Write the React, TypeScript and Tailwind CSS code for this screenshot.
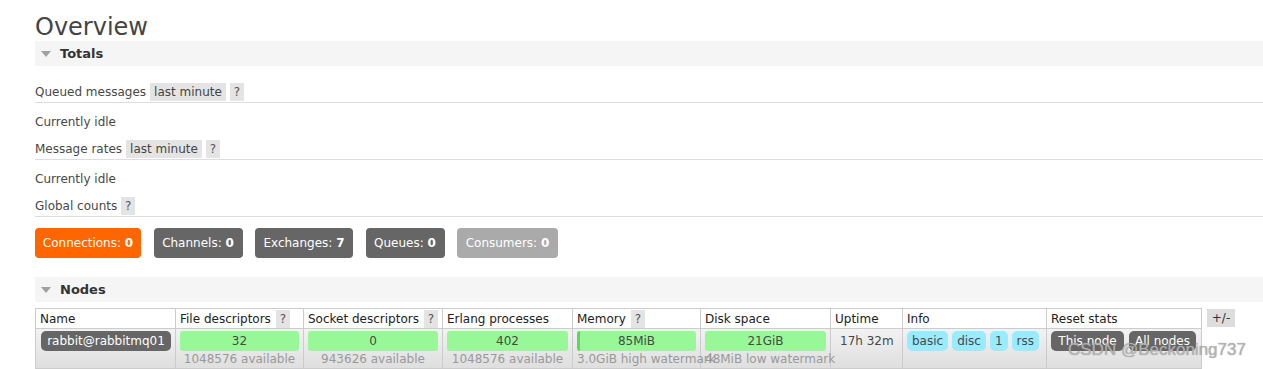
import React from "react";

const font = { fontFamily: '"DejaVu Sans", Verdana, sans-serif' };

function SectionBar({ title }: { title: string }) {
  return (
    <div className="flex h-[25px] items-center bg-[#f5f5f5]">
      <svg className="ml-[6px] h-[6px] w-[10px]" viewBox="0 0 10 6">
        <path d="M0 0h10L5 6z" fill="#a0a0a0" />
      </svg>
      <span className="ml-[9px] text-[13px] font-bold text-[#333]">{title}</span>
    </div>
  );
}

function Help() {
  return (
    <span className="ml-[4px] flex h-[18px] w-[14px] items-center justify-center bg-[#e4e4e4] text-[#555]">?</span>
  );
}

function Range({ label }: { label: string }) {
  return <span className="ml-[4px] flex h-[18px] items-center bg-[#e4e4e4] px-[4px] text-[#444]">{label}</span>;
}

function Bar({ value, sub, used }: { value: string; sub: string; used?: boolean }) {
  return (
    <div className="px-[4px]">
      <div className="relative flex h-[20px] items-center justify-center overflow-hidden rounded-[3px] bg-[#98f898] text-[#484848]">
        {used && <div className="absolute left-0 top-0 h-full w-[3px] bg-[#5fd65f]" />}
        {value}
      </div>
      <div className="whitespace-nowrap text-center leading-[17px] text-[#999]">{sub}</div>
    </div>
  );
}

export default function App() {
  const counts = [
    { label: "Connections", value: 0, w: "w-[106px]", bg: "bg-[#ff6600]" },
    { label: "Channels", value: 0, w: "w-[89px]", bg: "bg-[#666]" },
    { label: "Exchanges", value: 7, w: "w-[98px]", bg: "bg-[#666]" },
    { label: "Queues", value: 0, w: "w-[79px]", bg: "bg-[#666]" },
    { label: "Consumers", value: 0, w: "w-[101px]", bg: "bg-[#aaa]" },
  ];

  const headers = [
    { label: "Name", w: "w-[140px]" },
    { label: "File descriptors", w: "w-[128px]", help: true },
    { label: "Socket descriptors", w: "w-[139px]", help: true },
    { label: "Erlang processes", w: "w-[130px]" },
    { label: "Memory", w: "w-[128px]", help: true },
    { label: "Disk space", w: "w-[130px]" },
    { label: "Uptime", w: "w-[72px]" },
    { label: "Info", w: "w-[144px]" },
    { label: "Reset stats", w: "w-[155px]" },
  ];

  return (
    <div className="relative h-[369px] w-[1263px] overflow-hidden bg-white pl-[35px] text-[12px] text-[#484848]" style={font}>
      {/* Заголовок */}
      <div className="h-[41px] pt-[13px] text-[24px] leading-[28px] text-[#444]">Overview</div>

      <SectionBar title="Totals" />

      <div className="mt-[17px] flex h-[20px] items-start border-b border-[#ddd]">
        <span className="flex h-[18px] items-center">Queued messages</span>
        <Range label="last minute" />
        <Help />
      </div>
      <div className="flex h-[37px] items-center">Currently idle</div>

      <div className="flex h-[20px] items-start border-b border-[#ddd]">
        <span className="flex h-[18px] items-center">Message rates</span>
        <Range label="last minute" />
        <Help />
      </div>
      <div className="flex h-[37px] items-center">Currently idle</div>

      <div className="flex h-[20px] items-start border-b border-[#ddd]">
        <span className="flex h-[18px] items-center">Global counts</span>
        <Help />
      </div>

      {/* Счётчики */}
      <div className="mt-[11px] flex gap-[12.5px]">
        {counts.map((c) => (
          <div key={c.label} className={`flex h-[30px] items-center justify-center rounded-[4px] text-white ${c.w} ${c.bg}`}>
            {c.label}:&nbsp;<b>{c.value}</b>
          </div>
        ))}
      </div>

      <div className="mt-[19px]">
        <SectionBar title="Nodes" />
      </div>

      {/* Таблица узлов */}
      <div className="mt-[6px] flex items-start">
        <table className="w-[1166px] table-fixed border-collapse">
          <colgroup>
            {headers.map((h) => (
              <col key={h.label} className={h.w} />
            ))}
          </colgroup>
          <thead>
            <tr className="h-[20px] bg-white">
              {headers.map((h) => (
                <th key={h.label} className="border border-[#ccc] p-0 text-left font-normal text-[#222]">
                  <div className="flex h-[19px] items-center whitespace-nowrap pl-[4px]">
                    {h.label}
                    {h.help && (
                      <span className="ml-[5px] flex h-[18px] w-[14px] items-center justify-center bg-[#e4e4e4] text-[#555]">?</span>
                    )}
                  </div>
                </th>
              ))}
            </tr>
          </thead>
          <tbody>
            <tr className="bg-gradient-to-b from-[#f2f2f2] to-[#dedede] align-top">
              <td className="border border-[#ccc] px-[5px] pb-[8px] pt-[2px]">
                <span className="flex h-[20px] w-[130px] items-center justify-center rounded-[5px] bg-[#666] text-white">
                  rabbit@rabbitmq01
                </span>
              </td>
              <td className="border border-[#ccc] pt-[2px]">
                <Bar value="32" sub="1048576 available" />
              </td>
              <td className="border border-[#ccc] pt-[2px]">
                <Bar value="0" sub="943626 available" />
              </td>
              <td className="border border-[#ccc] pt-[2px]">
                <Bar value="402" sub="1048576 available" />
              </td>
              <td className="border border-[#ccc] pt-[2px]">
                <Bar value="85MiB" sub="3.0GiB high watermark" used />
              </td>
              <td className="border border-[#ccc] pt-[2px]">
                <Bar value="21GiB" sub="48MiB low watermark" />
              </td>
              <td className="border border-[#ccc] pt-[2px]">
                <div className="flex h-[20px] items-center whitespace-nowrap pl-[9px]">17h 32m</div>
              </td>
              <td className="border border-[#ccc] pl-[4px] pt-[2px]">
                <div className="flex gap-[4px]">
                  {["basic", "disc", "1", "rss"].map((t) => (
                    <span key={t} className="flex h-[20px] items-center rounded-[5px] bg-[#99ebff] px-[5px]">
                      {t}
                    </span>
                  ))}
                </div>
              </td>
              <td className="border border-[#ccc] pl-[4px] pt-[2px]">
                <div className="flex gap-[5px]">
                  <span className="flex h-[20px] w-[73px] items-center justify-center whitespace-nowrap rounded-[5px] bg-[#666] text-white">This node</span>
                  <span className="flex h-[20px] w-[67px] items-center justify-center whitespace-nowrap rounded-[5px] bg-[#666] text-white">All nodes</span>
                </div>
              </td>
            </tr>
          </tbody>
        </table>
        <span className="ml-[5px] mt-[1px] flex h-[18px] w-[28px] items-center justify-center bg-[#ddd] text-[#333]">+/-</span>
      </div>

      {/* Водяной знак */}
      <div
        className="absolute left-[1068px] top-[337px] whitespace-nowrap text-[17px] text-[#bbb]/80"
        style={{ fontFamily: '"Liberation Sans", Arial, sans-serif', textShadow: "0 0 1px #888" }}
      >
        CSDN @Beckoning737
      </div>
    </div>
  );
}
